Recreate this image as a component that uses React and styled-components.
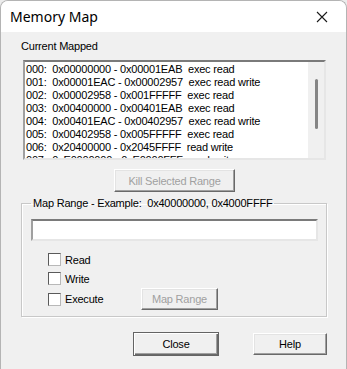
import styled, { createGlobalStyle } from 'styled-components';

const GlobalStyle = createGlobalStyle`
  html, body { margin: 0; padding: 0; background: #ececec; }
  * { box-sizing: border-box; }
`;

const ranges = [
  ['000:', '0x00000000 - 0x00001EAB', 'exec read'],
  ['001:', '0x00001EAC - 0x00002957', 'exec read write'],
  ['002:', '0x00002958 - 0x001FFFFF', 'exec read'],
  ['003:', '0x00400000 - 0x00401EAB', 'exec read'],
  ['004:', '0x00401EAC - 0x00402957', 'exec read write'],
  ['005:', '0x00402958 - 0x005FFFFF', 'exec read'],
  ['006:', '0x20400000 - 0x2045FFFF', 'read write'],
  ['007:', '0xE0000000 - 0xE0000FFF', 'read write'],
];

const App = () => {
  return (
    <>
      <GlobalStyle />
      <Window>
        <TitleBar>
          <Title>Memory Map</Title>
          <CloseX>
            <svg width="12" height="12" viewBox="0 0 12 12">
              <path d="M1 1 L11 11 M11 1 L1 11" stroke="#1a1a1a" strokeWidth="1.1" fill="none" />
            </svg>
          </CloseX>
        </TitleBar>
        <Body>
          <Label>Current Mapped</Label>
          <ListBox>
            <Rows>
              {ranges.map((r) => (
                <Row key={r[0]}>{`${r[0]}  ${r[1]}  ${r[2]}`}</Row>
              ))}
            </Rows>
            <ScrollTrack>
              <Thumb />
            </ScrollTrack>
          </ListBox>
          <Button disabled $w={121} $h={23} $ml={94} $mt={9}>Kill Selected Range</Button>
          <Group>
            <Legend>Map Range - Example:  0x40000000, 0x4000FFFF</Legend>
            <TextInput />
            <Checks>
              <CheckRow>
                <CheckItem><Box />Read</CheckItem>
              </CheckRow>
              <CheckRow>
                <CheckItem><Box />Write</CheckItem>
              </CheckRow>
              <CheckRow $h={22}>
                <CheckItem><Box />Execute</CheckItem>
                <Button disabled $w={77} $h={22}>Map Range</Button>
              </CheckRow>
            </Checks>
          </Group>
          <Footer>
            <Button $default $w={86} $h={24}>Close</Button>
            <Button $w={74} $h={22}>Help</Button>
          </Footer>
        </Body>
      </Window>
    </>
  );
};

const Window = styled.div`
  min-height: 100vh;
  background: #f0f0f0;
  border: 1px solid #b4b4b4;
  border-bottom: none;
  border-radius: 8px 8px 0 0;
  overflow: hidden;
  display: flex;
  flex-direction: column;
  font-family: "Liberation Sans", Arial, sans-serif;
  font-size: 11px;
  letter-spacing: -0.2px;
  color: #000;
`;

const TitleBar = styled.div`
  height: 31px;
  background: #fff;
  display: flex;
  align-items: center;
  justify-content: space-between;
  padding: 0 9px 0 9px;
`;

const Title = styled.div`
  font-family: "Noto Sans", "Open Sans", sans-serif;
  font-size: 14px;
  letter-spacing: 0;
  color: #000;
`;

const CloseX = styled.div`
  width: 24px;
  height: 24px;
  display: flex;
  align-items: center;
  justify-content: center;
  margin-right: 3px;
`;

const Body = styled.div`
  padding: 8px 19px 0 19px;
  display: flex;
  flex-direction: column;
  align-items: flex-start;
`;

const Label = styled.div`
  line-height: 13px;
  margin-left: 1px;
`;

const ListBox = styled.div`
  margin: 7px 1px 0 3px;
  align-self: stretch;
  height: 100px;
  display: flex;
  background: #fff;
  border-style: solid;
  border-width: 2px;
  border-color: #7a7a7a #e6e6e6 #e6e6e6 #a0a0a0;
`;

const Rows = styled.div`
  flex: 1;
  overflow: hidden;
  padding: 1px 0 0 1px;
`;

const Row = styled.div`
  height: 13px;
  line-height: 13px;
  white-space: pre;
`;

const ScrollTrack = styled.div`
  width: 16px;
  background: #f0f0f0;
  display: flex;
  justify-content: center;
  padding-top: 17px;
`;

const Thumb = styled.div`
  width: 3px;
  height: 50px;
  border-radius: 2px;
  background: #858585;
`;

const Button = styled.button`
  width: ${(p) => p.$w}px;
  height: ${(p) => p.$h}px;
  margin-left: ${(p) => p.$ml || 0}px;
  margin-top: ${(p) => p.$mt || 0}px;
  padding: 0;
  background: #f0f0f0;
  font-family: "Liberation Sans", Arial, sans-serif;
  font-size: 11px;
  letter-spacing: -0.2px;
  color: ${(p) => (p.disabled ? '#a0a0a0' : '#000')};
  border-style: solid;
  border-width: 1px;
  border-color: #fff #696969 #696969 #fff;
  box-shadow: inset -1px -1px 0 #a0a0a0, inset 1px 1px 0 #e3e3e3;
  outline: none;
  ${(p) => p.$default && `
    border-color: #646464;
    box-shadow: inset 1px 1px 0 #fff, inset -1px -1px 0 #696969, inset -2px -2px 0 #a0a0a0;
  `}
`;

const Group = styled.fieldset`
  align-self: stretch;
  margin: 5px 0 0 1px;
  padding: 2px 8px 6px 9px;
  border: 1px solid #c8c8c8;
  box-shadow: 1px 1px 0 #fff, inset 1px 1px 0 #fff;
  min-width: 0;
`;

const Legend = styled.legend`
  padding: 0 2px;
  margin-left: 0;
  line-height: 13px;
  white-space: pre;
`;

const TextInput = styled.input`
  display: block;
  width: 100%;
  height: 22px;
  margin: 7px 0 0 0;
  background: #fff;
  border-style: solid;
  border-width: 2px;
  border-color: #7a7a7a #e6e6e6 #e6e6e6 #a0a0a0;
  outline: none;
`;

const Checks = styled.div`
  margin-top: 9px;
  padding-left: 17px;
  display: flex;
  flex-direction: column;
`;

const CheckRow = styled.div`
  height: ${(p) => p.$h || 19}px;
  display: flex;
  align-items: center;
`;

const CheckItem = styled.label`
  width: 93px;
  display: flex;
  align-items: center;
  gap: 4px;
`;

const Box = styled.span`
  width: 13px;
  height: 13px;
  background: #fff;
  border: 1px solid;
  border-color: #5a5a5a #b8b8b8 #b8b8b8 #5a5a5a;
`;

const Footer = styled.div`
  align-self: stretch;
  margin-top: 15px;
  display: flex;
  justify-content: flex-end;
  align-items: center;
  gap: 34px;
`;

export default App;
